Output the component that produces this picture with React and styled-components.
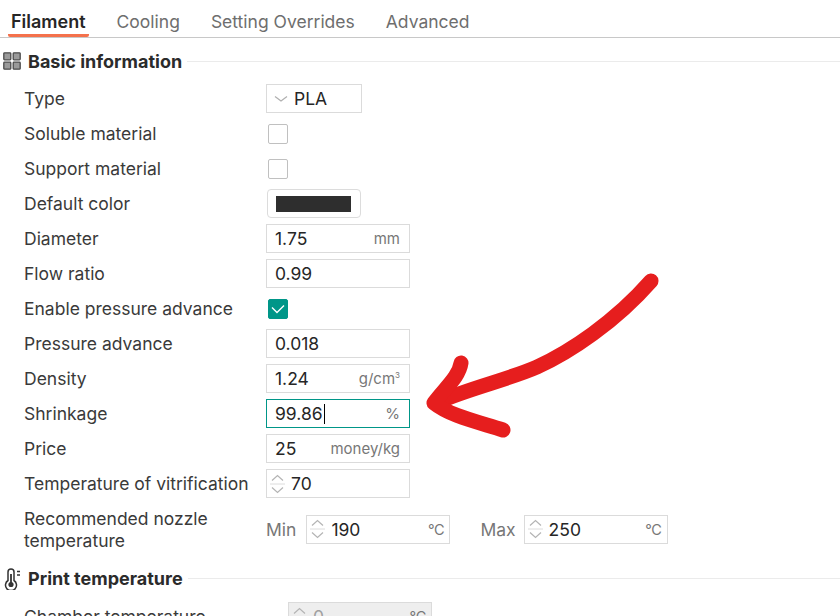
import React from 'react'
import styled, {createGlobalStyle} from 'styled-components'

const Global = createGlobalStyle`
html,body{
margin:0;
padding:0;
background:#fff;
height:100%;
overflow:hidden;
}
*{box-sizing:border-box;}
`

const GridIcon = ()=>(
    <svg width="18" height="18" viewBox="0 0 18 18">
        <g fill="#9a9a9a" stroke="#4a4a4a" strokeWidth="1.300">
            <rect x="0.800" y="0.800" width="7" height="7" rx="0.800"/>
            <rect x="10.200" y="0.800" width="7" height="7" rx="0.800"/>
            <rect x="0.800" y="10.200" width="7" height="7" rx="0.800"/>
            <rect x="10.200" y="10.200" width="7" height="7" rx="0.800"/>
        </g>
    </svg>
)

const ThermoIcon = ()=>(
    <svg width="18" height="22" viewBox="0 0 18 22">
        <path d="M5 4a3 3 0 0 1 6 0v8.500a5.500 5.500 0 1 1-6 0z" fill="none" stroke="#333" strokeWidth="1.500"/>
        <circle cx="8" cy="16.500" r="2.600" fill="#333"/>
        <path d="M8 6v10" stroke="#333" strokeWidth="1.800"/>
        <path d="M14 3.500h3M14 7h3" stroke="#333" strokeWidth="1.400"/>
    </svg>
)

const Spinner = ()=>(
    <SpinBox>
        <svg width="15" height="26" viewBox="0 0 15 26">
            <path d="M2 9.500 7.500 4.500l5.500 5" fill="none" stroke="#b4b4b4" strokeWidth="1.200"/>
            <path d="M0 13h15" stroke="#dcdcdc" strokeWidth="1"/>
            <path d="M2 16.500 7.500 21.500l5.500-5" fill="none" stroke="#b4b4b4" strokeWidth="1.200"/>
        </svg>
    </SpinBox>
)

const Field = ({value, unit, spin, focus, off, caret, degree})=>(
    <Input focus={focus} off={off}>
        {spin && <Spinner/>}
        <Value off={off}>{value}{caret && <Caret/>}</Value>
        {unit && <Unit degree={degree}>{unit}</Unit>}
    </Input>
)

const Row = ({label, tall, wide, children})=>(
    <RowWrap tall={tall}>
        <Label wide={wide} tall={tall}>{label}</Label>
        {children}
    </RowWrap>
)

const App = ()=>{
    return (
        <Page>
            <Global/>
            <Tabs>
                <Tab active>Filament</Tab>
                <Tab>Cooling</Tab>
                <Tab>Setting Overrides</Tab>
                <Tab>Advanced</Tab>
            </Tabs>

            <SectionHead first>
                <IconSlot><GridIcon/></IconSlot>
                <SectionTitle>Basic information</SectionTitle>
                <Rule/>
            </SectionHead>

            <Row label="Type">
                <Select>
                    <svg width="14" height="8" viewBox="0 0 14 8">
                        <path d="M1 1.500 7 6l6-4.500" fill="none" stroke="#b0b0b0" strokeWidth="1.200"/>
                    </svg>
                    <Value>PLA</Value>
                </Select>
            </Row>
            <Row label="Soluble material"><Check/></Row>
            <Row label="Support material"><Check/></Row>
            <Row label="Default color">
                <ColorButton><Swatch/></ColorButton>
            </Row>
            <Row label="Diameter"><Field value="1.75" unit="mm"/></Row>
            <Row label="Flow ratio"><Field value="0.99"/></Row>
            <Row label="Enable pressure advance">
                <Check checked>
                    <svg width="14" height="10" viewBox="0 0 14 10">
                        <path d="M1 3.500 6 8.500 13 1.500" fill="none" stroke="#fff" strokeWidth="1.400"/>
                    </svg>
                </Check>
            </Row>
            <Row label="Pressure advance"><Field value="0.018"/></Row>
            <Row label="Density"><Field value="1.24" unit={<>g/cm<sup>3</sup></>}/></Row>
            <Row label="Shrinkage"><Field value="99.86" unit="%" focus caret/></Row>
            <Row label="Price"><Field value="25" unit="money/kg"/></Row>
            <Row label="Temperature of vitrification"><Field value="70" spin/></Row>
            <Row tall label={<>Recommended nozzle<br/>temperature</>}>
                <RangeLabel>Min</RangeLabel>
                <Field value="190" unit="°C" degree spin/>
                <RangeLabel second>Max</RangeLabel>
                <Field value="250" unit="°C" degree spin/>
            </Row>

            <SectionHead>
                <IconSlot><ThermoIcon/></IconSlot>
                <SectionTitle>Print temperature</SectionTitle>
                <Rule/>
            </SectionHead>
            <Row wide label="Chamber temperature"><Field value="0" unit="°C" degree spin off/></Row>

            <Arrow viewBox="0 0 840 616">
                <path d="M651 281C615 322 570 352 537 367C510 379 470 388 438 402" fill="none" stroke="#e61e1e" strokeWidth="15" strokeLinecap="round"/>
                <path d="M461 363C459 377 445 388 434 403C450 416 478 422 503 430" fill="none" stroke="#e61e1e" strokeWidth="15" strokeLinecap="round" strokeLinejoin="round"/>
            </Arrow>
        </Page>
    )
}

export default App

const Page = styled.div`
position:relative;
width:840px;
height:616px;
overflow:hidden;
background:#fff;
font-family:"Inter","Noto Sans",sans-serif;
font-size:17.500px;
color:#333;
`
const Tabs = styled.div`
display:flex;
height:38px;
padding-left:8px;
gap:25px;
border-bottom:1px solid #c8c8c8;
`
const Tab = styled.div`
height:37px;
padding:0 3px;
line-height:43px;
font-size:${p=>p.active?18:17.500}px;
font-weight:${p=>p.active?600:400};
color:${p=>p.active?'#262626':'#6e6e6e'};
border-bottom:${p=>p.active?'3px solid #f4714c':'none'};
border-radius:0 0 2px 2px;
`
const SectionHead = styled.div`
display:flex;
align-items:center;
height:${p=>p.first?43:42}px;
padding-top:${p=>p.first?3:1}px;
padding-left:3px;
`
const IconSlot = styled.div`
display:flex;
align-items:center;
width:25px;
`
const SectionTitle = styled.div`
font-size:18px;
font-weight:700;
color:#2b2b2b;
white-space:nowrap;
`
const Rule = styled.div`
flex:1;
height:1px;
margin-left:5px;
background:#ebebeb;
`
const RowWrap = styled.div`
display:flex;
align-items:center;
height:${p=>p.tall?56:35}px;
padding-left:24px;
`
const Label = styled.div`
width:${p=>p.wide?264:242}px;
margin-top:${p=>p.tall?1:0}px;
line-height:22px;
color:#3a3a3a;
white-space:nowrap;
`
const Input = styled.div`
display:flex;
align-items:center;
width:144px;
height:29px;
padding:0 9px 0 8px;
background:${p=>p.off?'#eeeeee':'#fff'};
border:1px solid ${p=>p.focus?'#009688':'#dbdbdb'};
`
const Value = styled.span`
flex:1;
color:${p=>p.off?'#a0a0a0':'#262626'};
white-space:nowrap;
`
const Caret = styled.span`
display:inline-block;
width:1px;
height:20px;
margin-left:1px;
vertical-align:-4px;
background:#000;
`
const Unit = styled.span`
font-size:${p=>p.degree?14.500:15}px;
letter-spacing:${p=>p.degree?-0.300:0}px;
margin-right:${p=>p.degree?-4:0}px;
color:#777;
white-space:nowrap;
sup{
font-size:8px;
line-height:0;
}
`
const SpinBox = styled.div`
display:flex;
align-items:center;
width:15px;
margin:0 6px 0 -5px;
`
const Select = styled.div`
display:flex;
align-items:center;
gap:6px;
width:96px;
height:29px;
padding:0 7px;
border:1px solid #dbdbdb;
`
const Check = styled.div`
display:flex;
align-items:center;
justify-content:center;
width:20px;
height:20px;
margin-left:2px;
border-radius:2px;
background:${p=>p.checked?'#009688':'#fff'};
border:1px solid ${p=>p.checked?'#009688':'#c0c0c0'};
`
const ColorButton = styled.div`
display:flex;
align-items:center;
justify-content:center;
width:94px;
height:29px;
margin-left:1px;
padding-right:2px;
border:1px solid #dcdcdc;
border-radius:4px;
`
const Swatch = styled.div`
width:75px;
height:16px;
background:#2e2e2e;
`
const RangeLabel = styled.span`
margin-left:${p=>p.second?30:0}px;
margin-right:${p=>p.second?8:10}px;
color:#777;
`
const Arrow = styled.svg`
position:absolute;
top:0;
left:0;
width:840px;
height:616px;
pointer-events:none;
`
